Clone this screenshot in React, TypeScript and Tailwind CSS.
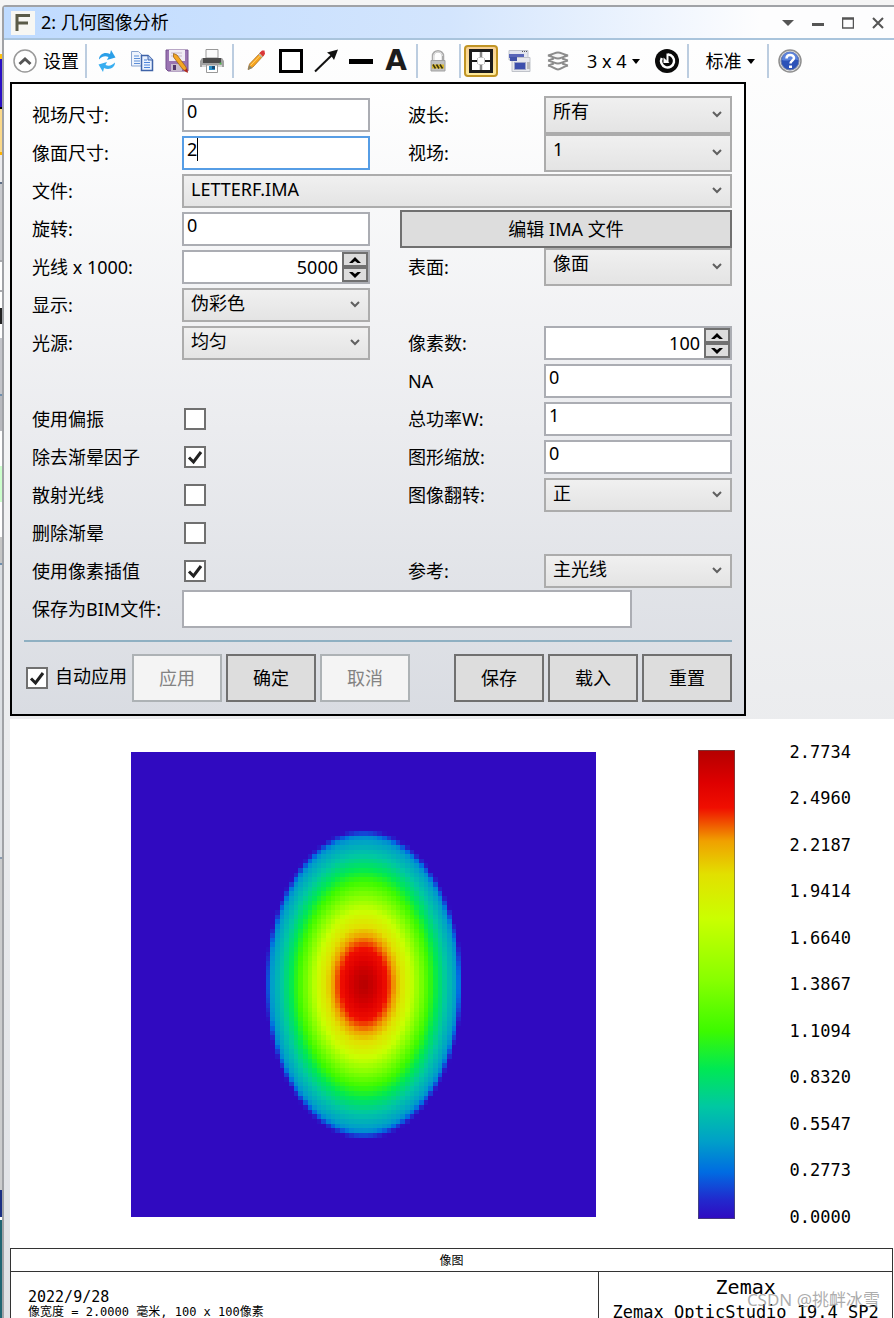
import { useMemo, type ReactNode } from "react";
import clsx from "clsx";

// =========================================================
// Colour scale shared by the image map and the legend bar
// =========================================================
type Stop = [number, number[]];

const SCALE: Stop[] = [
  [0, [48, 10, 192]],
  [0.04, [34, 40, 205]],
  [0.1, [0, 108, 226]],
  [0.166, [0, 160, 200]],
  [0.24, [0, 200, 162]],
  [0.32, [0, 232, 84]],
  [0.4, [60, 250, 0]],
  [0.51, [136, 255, 0]],
  [0.64, [202, 255, 0]],
  [0.735, [226, 224, 0]],
  [0.806, [240, 160, 0]],
  [0.877, [240, 14, 0]],
  [0.93, [222, 0, 0]],
  [1, [180, 0, 0]],
];

// Normalised radius -> intensity
const PROFILE: [number, number][] = [
  [0, 1],
  [0.12, 0.95],
  [0.23, 0.88],
  [0.31, 0.81],
  [0.38, 0.735],
  [0.48, 0.64],
  [0.57, 0.51],
  [0.67, 0.4],
  [0.75, 0.32],
  [0.84, 0.24],
  [0.93, 0.17],
  [0.96, 0.14],
  [0.98, 0.08],
  [1.01, 0],
];

const LEGEND = [
  "2.7734", "2.4960", "2.2187", "1.9414", "1.6640", "1.3867",
  "1.1094", "0.8320", "0.5547", "0.2773", "0.0000",
];

const LEGEND_GRADIENT = `linear-gradient(to top, ${SCALE.map(([t, c]) => `rgb(${c.join(",")}) ${t * 100}%`).join(", ")})`;

function scaleColor(t: number) {
  for (let i = 1; i < SCALE.length; i++) {
    const [t1, c1] = SCALE[i];
    const [t0, c0] = SCALE[i - 1];
    if (t <= t1) {
      const k = (t - t0) / (t1 - t0);
      return `rgb(${c0.map((c, n) => Math.round(c + (c1[n] - c) * k)).join(",")})`;
    }
  }
  return "rgb(180,0,0)";
}

function intensity(r: number) {
  for (let i = 1; i < PROFILE.length; i++) {
    const [r1, v1] = PROFILE[i];
    const [r0, v0] = PROFILE[i - 1];
    if (r <= r1) return v0 + ((v1 - v0) * (r - r0)) / (r1 - r0);
  }
  return 0;
}

// 100 x 100 detector pixels, only the lit ones are drawn
function ImageMap() {
  const cells = useMemo(() => {
    const out: { x: number; y: number; fill: string }[] = [];
    for (let y = 15; y < 85; y++) {
      for (let x = 27; x < 73; x++) {
        const r = Math.hypot((x + 0.5 - 50.1) / 21, (y + 0.5 - 50) / 33);
        const v = intensity(r);
        if (v > 0) out.push({ x, y, fill: scaleColor(v) });
      }
    }
    return out;
  }, []);

  return (
    <svg viewBox="0 0 100 100" shapeRendering="crispEdges" className="block aspect-square min-w-0 flex-1" role="img" aria-label="像图">
      <rect width="100" height="100" fill="#300ac0" />
      {cells.map((c) => (
        <rect key={`${c.x}-${c.y}`} x={c.x} y={c.y} width="1" height="1" fill={c.fill} />
      ))}
    </svg>
  );
}

function LegendBar() {
  return (
    <div
      className="-my-0.5 ml-[102px] w-[37px] shrink-0 self-stretch border border-[#555]/60 bg-origin-border"
      style={{ backgroundImage: LEGEND_GRADIENT }}
    />
  );
}

// =========================================================
// Form controls
// =========================================================
function Label({ id, right, children }: { id: string; right?: boolean; children: ReactNode }) {
  return (
    <label htmlFor={id} className={clsx("whitespace-nowrap leading-6", right ? "col-start-3 pl-[38px]" : "col-start-1 pl-2")}>
      {children}
    </label>
  );
}

function TextField({ id, value = "", active, className = "h-[34px]" }: { id: string; value?: string; active?: boolean; className?: string }) {
  return (
    <div className={clsx("relative", className)}>
      <input
        id={id}
        type="text"
        defaultValue={value}
        className={clsx("block h-full w-full border-2 bg-white px-[3px] pb-2 leading-6 outline-none", active ? "border-[#569de5]" : "border-[#abadb3]")}
      />
      {active && <span className="absolute top-0.5 left-[15px] h-[23px] w-px bg-black" />}
    </div>
  );
}

function Spinner({ id, value }: { id: string; value: string }) {
  return (
    <div className="flex h-[34px] border-2 border-[#abadb3] bg-white">
      <input id={id} type="text" defaultValue={value} className="min-w-0 flex-1 bg-transparent pr-1 text-right leading-6 outline-none" />
      <div className="flex w-[26px] shrink-0 flex-col">
        <button type="button" aria-label="增加" className="flex flex-1 items-center justify-center border-2 border-[#707070] bg-[#ddd]">
          <svg width="14" height="8" viewBox="0 0 14 8"><path d="M1 7 7 1l6 6H9.500L7 5 4.500 7z" fill="#000" /></svg>
        </button>
        <button type="button" aria-label="减少" className="flex flex-1 items-center justify-center border-2 border-[#707070] bg-[#ddd]">
          <svg width="14" height="8" viewBox="0 0 14 8"><path d="M1 1l6 6 6-6H9.500L7 3 4.500 1z" fill="#000" /></svg>
        </button>
      </div>
    </div>
  );
}

function Select({ id, value, className = "h-[34px]", tall }: { id: string; value: string; className?: string; tall?: boolean }) {
  return (
    <div className={clsx("relative", tall ? "h-[38px]" : className)}>
      <select
        id={id}
        defaultValue={value}
        className={clsx(
          "block h-full w-full appearance-none border-2 border-[#acacac] bg-linear-to-b from-[#f0f0f0] to-[#e4e4e4] pr-8 pl-[7px] leading-6 outline-none",
          tall ? "pb-2" : "pb-1",
        )}
      >
        <option>{value}</option>
      </select>
      <svg width="10" height="7" viewBox="0 0 10 7" className={clsx("pointer-events-none absolute right-2.5", tall ? "top-[15px]" : "top-[13px]")}>
        <path d="M1 1l4 4 4-4" fill="none" stroke="#606060" strokeWidth="2" />
      </svg>
    </div>
  );
}

function Check({ id, checked }: { id: string; checked?: boolean }) {
  return (
    <span className="grid size-[22px] shrink-0 place-items-center">
      <input
        id={id}
        type="checkbox"
        defaultChecked={checked}
        className="peer col-start-1 row-start-1 size-[22px] appearance-none border-2 border-[#707070] bg-white"
      />
      <svg width="16" height="16" viewBox="0 0 16 16" className="pointer-events-none invisible col-start-1 row-start-1 peer-checked:visible">
        <path d="M2 8.500 6.500 13 14 3" fill="none" stroke="#212121" strokeWidth="3" />
      </svg>
    </span>
  );
}

function PushButton({ children, disabled, className = "h-12 w-[90px]" }: { children: ReactNode; disabled?: boolean; className?: string }) {
  return (
    <button
      type="button"
      disabled={disabled}
      className={clsx("border-2 leading-6", disabled ? "border-[#adb2b5] bg-[#f4f4f4] text-[#838383]" : "border-[#707070] bg-[#ddd]", className)}
    >
      {children}
    </button>
  );
}

function CheckRow({ id, checked, children }: { id: string; checked?: boolean; children: ReactNode }) {
  return (
    <>
      <Label id={id}>{children}</Label>
      <div className="col-start-2 pl-0.5"><Check id={id} checked={checked} /></div>
    </>
  );
}

// =========================================================
// Toolbar
// =========================================================
function Sep({ className = "mx-2" }: { className?: string }) {
  return <span className={clsx("h-[34px] w-0.5 shrink-0 bg-[#bccde0]", className)} />;
}

function Tool({ name, children }: { name: string; children: ReactNode }) {
  return (
    <button type="button" aria-label={name} className="size-6 shrink-0">
      <svg width="24" height="24" viewBox="0 0 24 24" fill="none">{children}</svg>
    </button>
  );
}

function Caret() {
  return <svg width="8" height="5" viewBox="0 0 8 5" className="shrink-0"><path d="M0 0h8L4 5z" fill="#000" /></svg>;
}

function Toolbar() {
  return (
    <div className="flex h-[42px] shrink-0 items-center overflow-hidden pl-[9px]">
      <button type="button" className="flex shrink-0 items-center gap-1.5 whitespace-nowrap">
        <svg width="24" height="24" viewBox="0 0 24 24" fill="none">
          <circle cx="12" cy="12" r="11" fill="#fff" stroke="#999" strokeWidth="1.500" />
          <path d="M6.500 15 12 10l5.500 5" stroke="#555" strokeWidth="3" />
        </svg>
        <span className="leading-6">设置</span>
      </button>
      <Sep className="mr-2 ml-1.5" />
      <div className="flex gap-[11px]">
        <Tool name="更新">
          <path d="M4 10.500c0-5.500 6-8 11-5.500L16 1l4.500 7.500L12 11l1.500-3C10 6.500 7 7.500 4 10.500z" fill="#2b9fe8" />
          <path d="M20 13.500c0 5.500-6 8-11 5.500L8 23l-4.500-7.500L12 13l-1.500 3c3.500 1.500 6.500.5 9.500-2.500z" fill="#38aef0" />
        </Tool>
        <Tool name="复制">
          <path d="M1.500 2.500h7l4 4V17h-11z" fill="#eef4fd" stroke="#8aa5d0" />
          <path d="M4 7h5M4 9.500h6M4 12h6M4 14.500h6" stroke="#5d8fd8" />
          <path d="M11.500 6.500H18l4.500 4.500v10.500h-11z" fill="#eaf2ff" stroke="#3f63a8" strokeWidth="1.500" />
          <path d="M18 6.500V11h4.500" fill="#b9d0f5" stroke="#3f63a8" />
          <path d="M14 11h3M14 13.500h6M14 16h6M14 18.500h6" stroke="#4c84da" />
        </Tool>
        <Tool name="保存">
          <path d="M1 1h22v21H3l-2-2z" fill="#9a74b2" stroke="#75508f" />
          <path d="M4 1h16v11H4z" fill="#f1ecf4" />
          <path d="M6 4h11M6 7h11" stroke="#c5b8ce" />
          <path d="M6 15h11v7H6z" fill="#c9bccf" />
          <path d="M8 16h3v5H8z" fill="#51366a" />
          <path d="M8.500 4.500 12 6l9 12 1 5-4.500-3L8.500 8z" fill="#f5a623" stroke="#9a641a" strokeWidth=".8" />
          <path d="M19 21.500 22 19.500l1 4.500z" fill="#b3261e" />
        </Tool>
        <Tool name="打印">
          <path d="M6 .5h12V9H6z" fill="#fafafa" stroke="#999" />
          <path d="M2 9h20l2 3v6H0v-6z" fill="#a2a2a2" />
          <path d="M3 9h18v5H3z" fill="#4c4c4c" />
          <path d="M2 16h20v2H2z" fill="#d5d5d5" />
          <path d="M6.500 16h11v7.500h-11z" fill="#fff" stroke="#999" />
          <path d="M9 17h6v4H9z" fill="#2a8fc6" />
          <path d="M12 17h3v3h-3z" fill="#174c78" />
          <circle cx="20.500" cy="14.500" r="1" fill="#4ec04e" />
        </Tool>
      </div>
      <Sep />
      <div className="flex gap-[11px] pl-0.5">
        <Tool name="铅笔">
          <path d="M4 20.500 5.500 15 17 3l3 3L9 18z" fill="#f7a51c" stroke="#a97434" strokeWidth=".8" />
          <path d="M6.500 16.500 18 4.500" stroke="#ffd074" />
          <path d="M15.500 4 18 1.500h2.500L21 5l-2 2.500z" fill="#d9363a" />
          <path d="M15 5l3 3" stroke="#b9b9b9" strokeWidth="1.500" />
          <path d="M4 21l1-5 3.500 3z" fill="#8b8467" />
        </Tool>
        <Tool name="矩形"><path d="M1.500 1.500h21v21h-21z" fill="#fff" stroke="#000" strokeWidth="3" /></Tool>
        <Tool name="箭头">
          <path d="M1 22.500 18 6" stroke="#111" strokeWidth="2" />
          <path d="M24 .5l-4 10.500-3-4.500L13 3.500z" fill="#111" />
        </Tool>
        <Tool name="直线"><path d="M0 12.500h24" stroke="#000" strokeWidth="5" /></Tool>
        <button type="button" aria-label="文字" className="h-6 w-6 shrink-0 text-center font-['DejaVu_Sans'] text-[28px] leading-6 font-bold text-[#1c1c1c]">A</button>
      </div>
      <Sep />
      <Tool name="锁定">
        <path d="M7 13V7c0-6.500 10-6.500 10 0v6" stroke="#a9a9a9" strokeWidth="2.500" />
        <path d="M7.500 12V7c0-5.500 9-5.500 9 0" stroke="#e2e2e2" />
        <path d="M5 11.500h14v10.500H5z" fill="#c2c2c2" stroke="#a2a2a2" />
        <path d="M6 15.500h12v4H6z" fill="#d9b92c" />
        <path d="M7 15.500l2.500 4m1-4 2.500 4m1-4 2.500 4" stroke="#3c3310" strokeWidth="1.500" />
      </Tool>
      <Sep className="mr-[3px] ml-[9px]" />
      <button type="button" aria-label="适合窗口" className="flex h-8 w-[34px] shrink-0 items-center justify-center rounded-sm border-2 border-[#c09424] bg-linear-to-b from-[#f6cf94] to-[#ffeb9c]">
        <svg width="24" height="24" viewBox="0 0 24 24" fill="none" className="shrink-0">
          <path d="M1.500 1.500h21v21h-21z" fill="#fff" stroke="#1c1c1c" strokeWidth="3" />
          <path d="M12 3v6M12 15v6" stroke="#888" strokeWidth="2.500" />
          <path d="M3 12h5M16 12h5" stroke="#1c1c1c" strokeWidth="2" />
          <path d="M8.500 9v6M15.500 9v6M9.500 8.500h5M9.500 15.500h5" stroke="#c4c4c4" />
        </svg>
      </button>
      <div className="flex gap-[14px] pl-2.5">
        <Tool name="窗口">
          <path d="M1 1.500h19V11H1z" fill="#e3e6ef" stroke="#bfc3cd" />
          <path d="M1 5h15v4H1z" fill="#5966b8" />
          <path d="M14 2.500h5" stroke="#555" strokeDasharray="1 1" />
          <path d="M4 8.500h18V22.500H4z" fill="#e8e9ed" stroke="#c0c3ca" />
          <path d="M2 8h7v4H2z" fill="#4152a8" />
          <path d="M6.500 13.500h11v7h-11z" fill="#3d4fac" stroke="#9da4c8" />
          <path d="M19 13h3v7h-3z" fill="#bbb" />
        </Tool>
        <Tool name="图层">
          <g stroke="#8c8c8c" strokeWidth="2">
            <path d="M12 3.500c3 0 5 2 10 3-5 1-7 3-10 3s-5-2-10-3c5-1 7-3 10-3z" fill="#f6f6f6" />
            <path d="M2 11.500c5 1 7 3 10 3s5-2 10-3M2 11.500c3-.5 4-1.500 6-2M22 11.500c-3-.5-4-1.500-6-2" />
            <path d="M2 16.500c5 1 7 4 10 4s5-3 10-4M2 16.500c3-.5 4-1.500 6-2M22 16.500c-3-.5-4-1.500-6-2" />
          </g>
        </Tool>
      </div>
      <button type="button" className="ml-[17px] flex shrink-0 items-center gap-1.5 leading-6 whitespace-nowrap">
        3 x 4 <Caret />
      </button>
      <div className="flex pl-[15px]">
        <Tool name="重置视图">
          <circle cx="12" cy="12" r="12" fill="#0a0a0a" />
          <path d="M13 5.500a6.500 6.500 0 1 1-6.200 3.500" stroke="#fff" strokeWidth="2.500" />
          <path d="M12.500 4.500V13" stroke="#fff" strokeWidth="2" />
          <path d="M8.500 8.500v5.500h6z" fill="#fff" />
        </Tool>
      </div>
      <Sep className="mr-4 ml-2" />
      <button type="button" className="flex shrink-0 items-center gap-1.5 leading-6 whitespace-nowrap">
        标准 <Caret />
      </button>
      <Sep className="mr-[9px] ml-3" />
      <Tool name="帮助">
        <circle cx="12" cy="12" r="11" fill="#e4e4e4" stroke="#8f8f8f" strokeWidth="1.500" />
        <circle cx="12" cy="12" r="9" fill="#2c52b8" stroke="#6f7fa8" />
        <path d="M4 11a8 8 0 0 1 16 0c-5-2-10 2-16 0z" fill="#5b83dd" />
        <path d="M8.500 9.500c0-5 7.500-4.500 7.500-.5 0 2.500-3.500 2.500-3.500 5.500" stroke="#fff" strokeWidth="2.500" />
        <path d="M11 16.500h3V19h-3z" fill="#fff" />
      </Tool>
    </div>
  );
}

function TitleBar() {
  return (
    <div className="flex h-[33px] shrink-0 items-center border-b-2 border-[#a9c4dc] bg-linear-to-r from-[#bfdbff] via-[#d3e5fd] via-50% to-[#fdfdfe] to-85% pr-2.5 pl-[7px]">
      <svg width="24" height="24" viewBox="0 0 24 24" className="shrink-0">
        <rect width="24" height="24" fill="#f7f7f3" />
        <path d="M6 20V4.500h13M6 12h11" fill="none" stroke="#5a5b48" strokeWidth="3" />
      </svg>
      <h1 className="ml-1.5 flex-1 truncate pb-0.5 leading-6">2: 几何图像分析</h1>
      <div className="flex gap-[18px]">
        <button type="button" aria-label="菜单"><svg width="12" height="12" viewBox="0 0 12 12"><path d="M0 3h12L6 9z" fill="#555" /></svg></button>
        <button type="button" aria-label="最小化"><svg width="12" height="12" viewBox="0 0 12 12"><path d="M0 6h12v3H0z" fill="#555" /></svg></button>
        <button type="button" aria-label="最大化"><svg width="12" height="12" viewBox="0 0 12 12"><path d="M.5 1h11v10H.5zM0 2h12" fill="none" stroke="#555" strokeWidth="1.500" /></svg></button>
        <button type="button" aria-label="关闭"><svg width="12" height="12" viewBox="0 0 12 12"><path d="M1 1l10 10M11 1 1 11" fill="none" stroke="#555" strokeWidth="2" /></svg></button>
      </div>
    </div>
  );
}

function SettingsPanel() {
  return (
    <form className="w-full max-w-[736px] shrink-0 border-2 border-black bg-linear-to-b from-white via-[#ebecef] via-55% to-[#d9dce2] px-3 py-3">
      <div className="grid auto-rows-[38px] grid-cols-[158px_minmax(0,1fr)_174px_minmax(0,1fr)] items-center">
        <Label id="field-size">视场尺寸:</Label>
        <TextField id="field-size" value="0" />
        <Label id="wavelength" right>波长:</Label>
        <Select id="wavelength" value="所有" tall />

        <Label id="image-size">像面尺寸:</Label>
        <TextField id="image-size" value="2" active />
        <Label id="field" right>视场:</Label>
        <Select id="field" value="1" tall />

        <Label id="file">文件:</Label>
        <Select id="file" value="LETTERF.IMA" className="col-span-3 h-[34px]" />

        <Label id="rotation">旋转:</Label>
        <TextField id="rotation" value="0" />
        <PushButton className="col-span-2 ml-[30px] h-[38px]">编辑 IMA 文件</PushButton>

        <Label id="rays">光线 x 1000:</Label>
        <Spinner id="rays" value="5000" />
        <Label id="surface" right>表面:</Label>
        <Select id="surface" value="像面" tall />

        <Label id="show">显示:</Label>
        <Select id="show" value="伪彩色" />

        <Label id="source">光源:</Label>
        <Select id="source" value="均匀" />
        <Label id="pixels" right>像素数:</Label>
        <Spinner id="pixels" value="100" />

        <Label id="na" right>NA</Label>
        <TextField id="na" value="0" />

        <CheckRow id="polarization">使用偏振</CheckRow>
        <Label id="watts" right>总功率W:</Label>
        <TextField id="watts" value="1" />

        <CheckRow id="vignetting-factors" checked>除去渐晕因子</CheckRow>
        <Label id="plot-scale" right>图形缩放:</Label>
        <TextField id="plot-scale" value="0" />

        <CheckRow id="scatter">散射光线</CheckRow>
        <Label id="parity" right>图像翻转:</Label>
        <Select id="parity" value="正" />

        <CheckRow id="delete-vignetted">删除渐晕</CheckRow>

        <CheckRow id="interpolation" checked>使用像素插值</CheckRow>
        <Label id="reference" right>参考:</Label>
        <Select id="reference" value="主光线" />

        <Label id="bim">保存为BIM文件:</Label>
        <TextField id="bim" className="col-span-3 mr-[100px] h-[38px]" />
      </div>

      <hr className="my-3 border-t-2 border-[#8fb0c2]" />

      <div className="flex items-center gap-1">
        <div className="flex w-[104px] shrink-0 items-center gap-[7px] pl-0.5">
          <Check id="auto-apply" checked />
          <label htmlFor="auto-apply" className="pb-1 leading-6 whitespace-nowrap">自动应用</label>
        </div>
        <PushButton disabled>应用</PushButton>
        <PushButton>确定</PushButton>
        <PushButton disabled>取消</PushButton>
        <span className="flex-1" />
        <PushButton>保存</PushButton>
        <PushButton>载入</PushButton>
        <PushButton>重置</PushButton>
      </div>
    </form>
  );
}

// Sliver of the main window that shows left of this one
function BackgroundStrip() {
  return (
    <div className="w-0.5 shrink-0 overflow-hidden">
      <div className="h-[54px] bg-[#f5f5f5]" />
      <div className="h-[5px] bg-[#ffc20e]" />
      <div className="h-12 bg-[#2a10c4]" />
      <div className="h-0.5 bg-black" />
      <div className="h-[43px] bg-[#fbd98a]" />
      <div className="h-[3px] bg-[#ffb300]" />
      <div className="h-[27px] bg-[#ececee]" />
      <div className="h-0.5 bg-[#5f6f86]" />
      <div className="h-[76px] bg-[#c9cace]" />
      <div className="h-8 border-y-2 border-[#a8a9ad] bg-white" />
      <div className="h-4 bg-white" />
      <div className="h-4 bg-[#222]" />
      <div className="h-3.5 bg-white" />
      <div className="h-14 bg-[#c3c4c9]" />
      <div className="h-0.5 bg-[#6f8fae]" />
      <div className="h-[35px] bg-[#b8b9be]" />
      <div className="h-[35px] bg-white" />
      <div className="h-[36px] bg-[#ccffcc]" />
      <div className="h-[35px] bg-white" />
      <div className="h-[26px] bg-[#c6c6c6]" />
      <div className="h-0.5 bg-[#6f8fae]" />
      <div className="h-[292px] bg-[#dcdfe3]" />
      <div className="h-0.5 bg-[#8a9bb0]" />
      <div className="h-[331px] bg-[#cbcccd]" />
      <div className="h-[27px] bg-[#1b2f84]" />
      <div className="h-[3px] bg-white" />
      <div className="h-[98px] bg-[#1f6573]" />
    </div>
  );
}

export default function App() {
  return (
    <div className="relative flex h-screen overflow-hidden bg-[#f5f5f5] font-['Noto_Sans','Noto_Sans_CJK_SC',sans-serif] text-[18px] text-black">
      <BackgroundStrip />
      <div className="mt-[5px] flex min-w-0 flex-1 flex-col rounded-tl-sm border-t-2 border-l-2 border-[#a0a2a6] bg-linear-to-b from-white via-[#ebecee] via-55% to-[#dfe1e5]">
        <TitleBar />
        <Toolbar />
        <main className="flex min-h-0 flex-1 flex-col pl-1.5">
          <SettingsPanel />

          <section className="mt-[3px] flex min-h-0 flex-1 flex-col bg-white font-['DejaVu_Sans_Mono','Noto_Sans_CJK_SC',monospace]">
            <div className="flex shrink-0 items-start pt-[33px] pr-[43px] pb-[31px] pl-[121px]">
              <ImageMap />
              <LegendBar />
              <ul className="-my-2.5 ml-[55px] flex flex-col justify-between self-stretch text-[17px] leading-5">
                {LEGEND.map((v) => (
                  <li key={v}>{v}</li>
                ))}
              </ul>
            </div>

            <div className="mr-px flex min-h-0 flex-1 flex-col border-x border-t border-[#333]">
              <div className="h-[23px] shrink-0 border-b border-[#333] text-center text-[12px] leading-6">像图</div>
              <div className="grid min-h-0 flex-1 grid-cols-[minmax(0,2fr)_minmax(0,1fr)] overflow-hidden">
                <div className="pt-4 pl-[17px]">
                  <p className="text-[15px] leading-[18px]">2022/9/28</p>
                  <p className="text-[12px] leading-3 whitespace-nowrap">像宽度 = 2.0000 毫米, 100 x 100像素</p>
                </div>
                <div className="border-l border-[#333] pt-[3px] text-center whitespace-nowrap">
                  <p className="text-[20px] leading-6">Zemax</p>
                  <p className="text-[17px] leading-[26px]">Zemax OpticStudio 19.4 SP2</p>
                </div>
              </div>
            </div>
          </section>
        </main>
      </div>
      <span className="absolute right-3.5 bottom-1.5 text-[17px] leading-6 text-[#888]/70">CSDN @挑衅冰雪</span>
    </div>
  );
}
